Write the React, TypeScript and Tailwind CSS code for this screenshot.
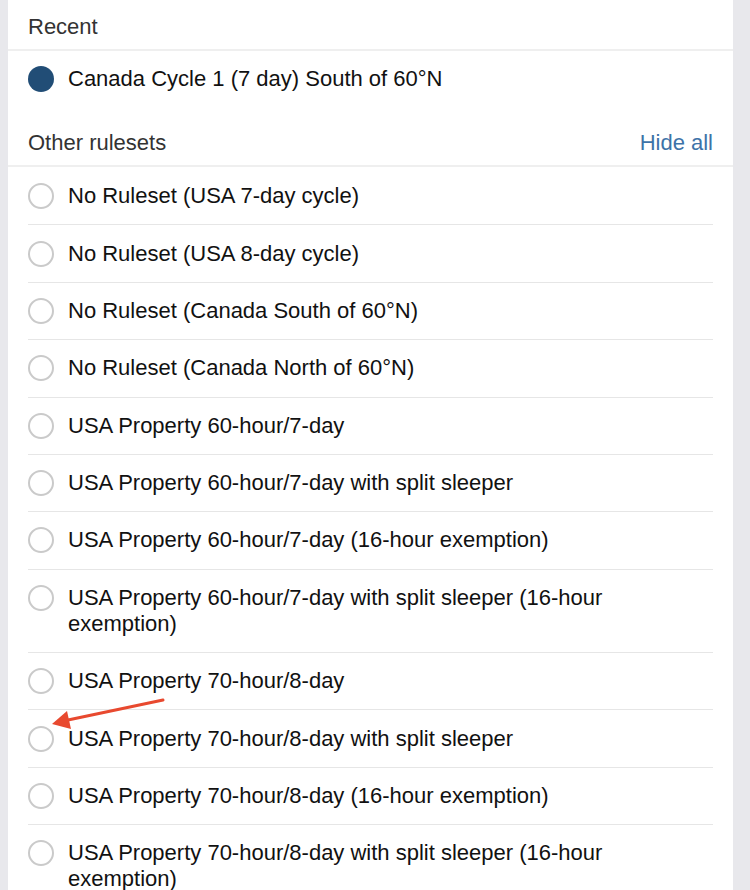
import React from "react";

const others: string[] = [
  "No Ruleset (USA 7-day cycle)",
  "No Ruleset (USA 8-day cycle)",
  "No Ruleset (Canada South of 60°N)",
  "No Ruleset (Canada North of 60°N)",
  "USA Property 60-hour/7-day",
  "USA Property 60-hour/7-day with split sleeper",
  "USA Property 60-hour/7-day (16-hour exemption)",
  "USA Property 60-hour/7-day with split sleeper (16-hour exemption)",
  "USA Property 70-hour/8-day",
  "USA Property 70-hour/8-day with split sleeper",
  "USA Property 70-hour/8-day (16-hour exemption)",
  "USA Property 70-hour/8-day with split sleeper (16-hour exemption)",
];

function Radio({ selected }: { selected?: boolean }) {
  return selected ? (
    <div className="w-[26px] h-[26px] rounded-full bg-[#214d76] shrink-0" />
  ) : (
    <div className="w-[26px] h-[26px] rounded-full border-2 border-[#cacaca] bg-white shrink-0" />
  );
}

export default function App() {
  return (
    <div
      className="w-[750px] h-[890px] overflow-hidden bg-[#e8e8ec] pl-[8px] pr-[17px]"
      style={{ fontFamily: '"Liberation Sans", Arial, sans-serif' }}
    >
      <div className="relative bg-white h-full">
        <div className="h-[51px] flex items-center pt-[3px] pl-[20px] border-b-2 border-[#efefef] text-[22px] text-[#333]">
          Recent
        </div>
        <div className="flex items-start gap-[14px] pl-[20px] pr-[20px] py-[15px] h-[57px]">
          <Radio selected />
          <span className="text-[22px] leading-[26px] text-[#111]">
            Canada Cycle 1 (7 day) South of 60°N
          </span>
        </div>
        <div className="h-[59px] flex items-end justify-between pl-[20px] pr-[20px] pb-[6px] border-b-2 border-[#efefef]">
          <span className="text-[22px] text-[#333]">Other rulesets</span>
          <span className="text-[22px] text-[#3d73a8]">Hide all</span>
        </div>
        <div className="pl-[20px] pr-[20px] pt-[1px]">
          {others.map((t) => (
            <div
              key={t}
              className="flex items-start gap-[14px] py-[15.2px] border-b border-[#e6e6e6]"
            >
              <Radio />
              <span className="text-[22px] leading-[26px] text-[#111] max-w-[600px]">{t}</span>
            </div>
          ))}
        </div>
        <svg
          className="absolute left-0 top-0 pointer-events-none"
          width="200"
          height="800"
          viewBox="0 0 200 800"
        >
          <line x1="155" y1="700" x2="60" y2="720" stroke="#e8492f" strokeWidth="3" strokeLinecap="round" />
          <polygon points="44,724 59,711 63,729" fill="#e8492f" />
        </svg>
      </div>
    </div>
  );
}
